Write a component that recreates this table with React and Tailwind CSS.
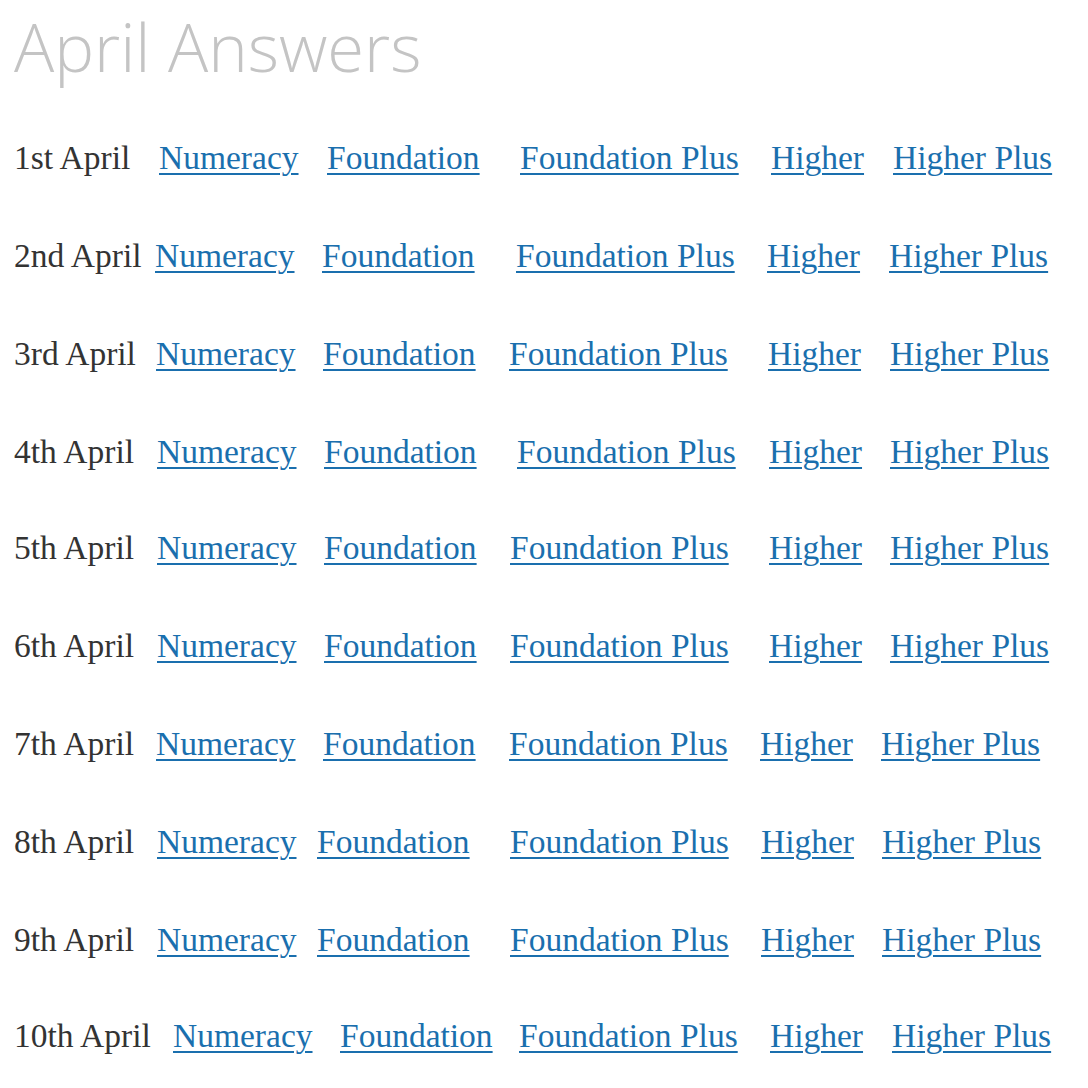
const rows = [
  { day: '1st April', h: 'h-[98px]', w: ['w-[145px]', 'w-[168px]', 'w-[193px]', 'w-[251px]', 'w-[122px]'] },
  { day: '2nd April', h: 'h-[98px]', w: ['w-[141px]', 'w-[167px]', 'w-[194px]', 'w-[251px]', 'w-[122px]'] },
  { day: '3rd April', h: 'h-[98px]', w: ['w-[142px]', 'w-[167px]', 'w-[186px]', 'w-[259px]', 'w-[122px]'] },
  { day: '4th April', h: 'h-[96px]', w: ['w-[143px]', 'w-[167px]', 'w-[193px]', 'w-[252px]', 'w-[121px]'] },
  { day: '5th April', h: 'h-[98px]', w: ['w-[143px]', 'w-[167px]', 'w-[186px]', 'w-[259px]', 'w-[121px]'] },
  { day: '6th April', h: 'h-[98px]', w: ['w-[143px]', 'w-[167px]', 'w-[186px]', 'w-[259px]', 'w-[121px]'] },
  { day: '7th April', h: 'h-[98px]', w: ['w-[142px]', 'w-[167px]', 'w-[186px]', 'w-[251px]', 'w-[121px]'] },
  { day: '8th April', h: 'h-[98px]', w: ['w-[143px]', 'w-[160px]', 'w-[193px]', 'w-[251px]', 'w-[121px]'] },
  { day: '9th April', h: 'h-[96px]', w: ['w-[143px]', 'w-[160px]', 'w-[193px]', 'w-[251px]', 'w-[121px]'] },
  { day: '10th April', h: 'h-[98px]', w: ['w-[159px]', 'w-[167px]', 'w-[179px]', 'w-[251px]', 'w-[122px]'] },
]

const links = ['Numeracy', 'Foundation', 'Foundation Plus', 'Higher', 'Higher Plus']

export default function App() {
  return (
    <div className="min-h-screen bg-white pl-[14px]">
      <h1 className="h-[109px] pt-[6px] font-['Open_Sans',sans-serif] text-[67px] font-light leading-[80px] text-[#c4c4c4]">
        April Answers
      </h1>

      <div className="font-['Liberation_Serif',serif] text-[33.5px] text-[#333]">
        {rows.map((r) => (
          <div key={r.day} className={`flex whitespace-nowrap leading-[98px] ${r.h}`}>
            <span className={`${r.w[0]} shrink-0`}>{r.day}</span>
            {links.map((l, i) => (
              <span key={l} className={`${i < 4 ? r.w[i + 1] : ''} shrink-0`}>
                <a href="#" className="text-[#1a6fae] underline decoration-2 underline-offset-[4px]">
                  {l}
                </a>
              </span>
            ))}
          </div>
        ))}
      </div>
    </div>
  )
}
